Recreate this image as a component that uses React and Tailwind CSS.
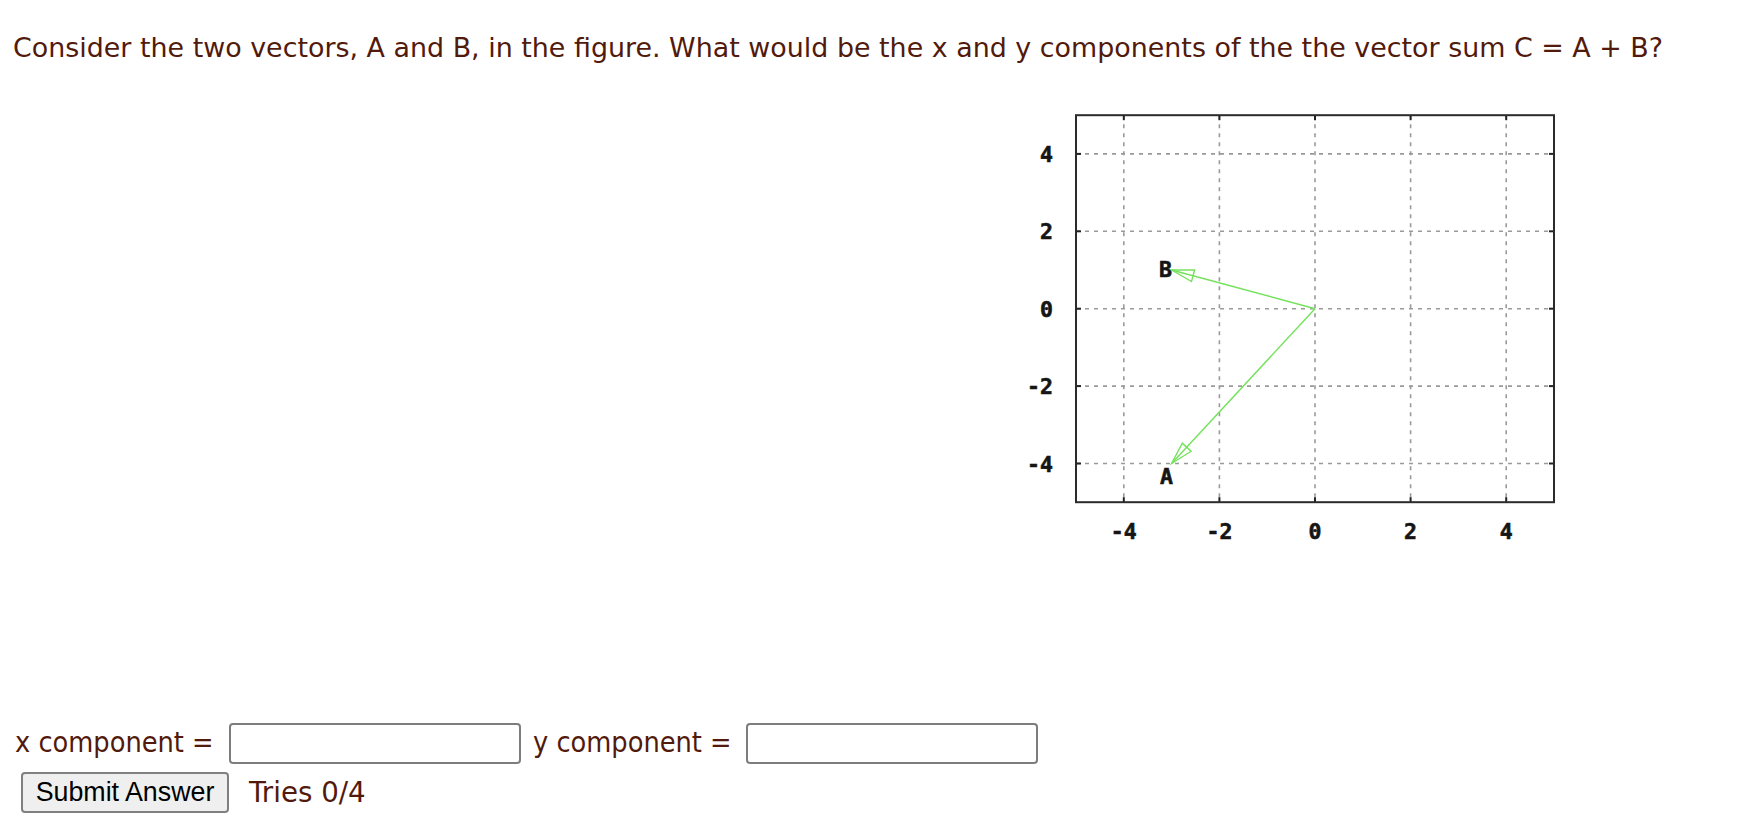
import React from "react";

const X0 = 295;
const SX = 47.8;
const Y0 = 208.7;
const SY = 38.7;
const px = (u) => X0 + u * SX;
const py = (v) => Y0 - v * SY;
const TICKS = [-4, -2, 0, 2, 4];
const GREEN = "#74e25c";

// gnuplot style empty arrow head, tip at (tx,ty), shaft coming from (fx,fy)
const headPoints = (tx, ty, fx, fy, len = 23, deg = 15) => {
  const d = Math.hypot(fx - tx, fy - ty);
  const ux = (fx - tx) / d;
  const uy = (fy - ty) / d;
  const a = (deg * Math.PI) / 180;
  const rot = (s) => [
    tx + len * (ux * Math.cos(s * a) - uy * Math.sin(s * a)),
    ty + len * (ux * Math.sin(s * a) + uy * Math.cos(s * a)),
  ];
  const p1 = rot(1);
  const p2 = rot(-1);
  return `${tx},${ty} ${p1[0]},${p1[1]} ${p2[0]},${p2[1]}`;
};

const VectorPlot = () => {
  const ox = px(0);
  const oy = py(0);
  const ax = px(-3);
  const ay = py(-4);
  const bx = px(-3);
  const by = py(1);

  return (
    <svg width="560" height="460" viewBox="0 0 560 460" className="block">
      {/* grid */}
      {TICKS.map((t) => (
        <line
          key={"v" + t}
          x1={px(t)}
          x2={px(t)}
          y1={py(5)}
          y2={py(-5)}
          stroke="#9a9a9a"
          strokeWidth="1.6"
          strokeDasharray="4 5"
        />
      ))}
      {TICKS.map((t) => (
        <line
          key={"h" + t}
          x1={px(-5)}
          x2={px(5)}
          y1={py(t)}
          y2={py(t)}
          stroke="#9a9a9a"
          strokeWidth="1.6"
          strokeDasharray="4 5"
        />
      ))}

      {/* tick marks */}
      {TICKS.map((t) => (
        <g key={"t" + t} stroke="#222" strokeWidth="2">
          <line x1={px(t)} x2={px(t)} y1={py(5)} y2={py(5) + 5} />
          <line x1={px(t)} x2={px(t)} y1={py(-5)} y2={py(-5) - 5} />
          <line x1={px(-5)} x2={px(-5) + 5} y1={py(t)} y2={py(t)} />
          <line x1={px(5)} x2={px(5) - 5} y1={py(t)} y2={py(t)} />
        </g>
      ))}

      {/* frame */}
      <rect
        x={px(-5)}
        y={py(5)}
        width={px(5) - px(-5)}
        height={py(-5) - py(5)}
        fill="none"
        stroke="#2b2b2b"
        strokeWidth="2"
      />

      {/* axis labels */}
      <g
        fontFamily="'DejaVu Sans Mono', 'Liberation Mono', monospace"
        fontWeight="700"
        fontSize="21.5"
        fill="#151515"
        stroke="#151515"
        strokeWidth="0.6"
      >
        {TICKS.map((t) => (
          <text key={"yl" + t} x="33" y={py(t) + 8} textAnchor="end">
            {t}
          </text>
        ))}
        {TICKS.map((t) => (
          <text key={"xl" + t} x={px(t)} y="439" textAnchor="middle">
            {t}
          </text>
        ))}
        <text x="152" y="177" textAnchor="end">B</text>
        <text x="153" y="384" textAnchor="end">A</text>
      </g>

      {/* vectors */}
      <g stroke={GREEN} strokeWidth="1.4" fill="none">
        <line x1={ox} y1={oy} x2={ax} y2={ay} />
        <polygon points={headPoints(ax, ay, ox, oy)} />
        <line x1={ox} y1={oy} x2={bx} y2={by} />
        <polygon points={headPoints(bx, by, ox, oy)} />
      </g>
    </svg>
  );
};

const App = () => {
  return (
    <div
      className="min-h-screen bg-white text-[#521a0b]"
      style={{ fontFamily: "'DejaVu Sans', Verdana, sans-serif" }}
    >
      <p className="pt-[32px] pl-[13px] text-[26.9px] leading-[32px] whitespace-nowrap">
        Consider the two vectors, A and B, in the figure. What would be the x
        and y components of the the vector sum C = A + B?
      </p>

      <div className="mt-[36px] pl-[1020px]">
        <VectorPlot />
      </div>

      <div className="mt-[163px] flex items-center h-[41px] pl-[15px]">
        <span
          className="w-[214px] pb-[4px] text-[28.6px] leading-[32px] whitespace-nowrap"
          style={{ fontFamily: "'DejaVu Sans Condensed', 'DejaVu Sans', sans-serif" }}
        >
          x component =
        </span>
        <input
          type="text"
          className="w-[292px] h-[41px] border-2 border-[#7d7d7d] rounded-[4px] bg-white"
        />
        <span
          className="ml-[12px] w-[213px] pb-[4px] text-[28.6px] leading-[32px] whitespace-nowrap"
          style={{ fontFamily: "'DejaVu Sans Condensed', 'DejaVu Sans', sans-serif" }}
        >
          y component =
        </span>
        <input
          type="text"
          className="w-[292px] h-[41px] border-2 border-[#7d7d7d] rounded-[4px] bg-white"
        />
      </div>

      <div className="mt-[8px] flex items-center pl-[21px]">
        <button
          type="button"
          className="h-[41px] w-[208px] bg-[#efefef] border-2 border-[#808080] rounded-[4px] text-black text-[26.8px] leading-none"
          style={{ fontFamily: "'Liberation Sans', Arial, sans-serif" }}
        >
          Submit Answer
        </button>
        <span className="ml-[20px] text-[27.7px] leading-[32px]">Tries 0/4</span>
      </div>
    </div>
  );
};

export default App;
